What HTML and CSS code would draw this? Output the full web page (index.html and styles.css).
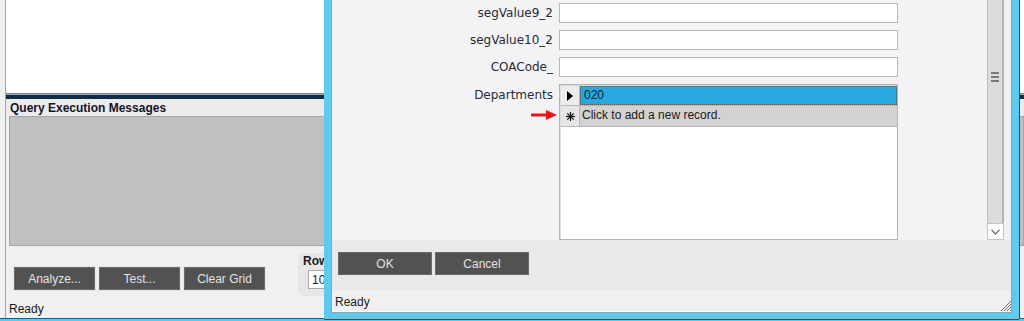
FILE: index.html
```html
<!DOCTYPE html>
<html>
<head>
<meta charset="utf-8">
<link rel="stylesheet" href="styles.css">
</head>
<body>
<div class="app">
  <div class="app-main">
    <div class="results"></div>
    <div class="splitter"></div>
    <div class="msg-head">Query Execution Messages</div>
    <div class="msg-body"></div>
    <div class="toolbar">
      <button class="dbtn wide">Analyze...</button>
      <button class="dbtn wide">Test...</button>
      <button class="dbtn wide">Clear Grid</button>
      <div class="rowpanel">
        <div class="rowlabel">Rows</div>
        <div class="rowinput">10</div>
      </div>
    </div>
    <div class="status">Ready</div>
  </div>
  <div class="taskbar"></div>
</div>

<div class="dialog">
  <div class="dlg-inner">
    <div class="dlg-body">
      <div class="form">
        <div class="lbl">segValue9_2</div><div class="inp"></div>
        <div class="lbl">segValue10_2</div><div class="inp"></div>
        <div class="lbl">COACode_</div><div class="inp"></div>
        <div class="lbl top">Departments</div>
        <div class="grid">
          <div class="grow">
            <div class="rh"><svg width="6" height="10" viewBox="0 0 6 10"><path d="M0 0 L6 5 L0 10 Z" fill="#000"/></svg></div>
            <div class="cell sel">020</div>
          </div>
          <div class="grow newrow">
            <div class="rh"><svg width="9" height="9" viewBox="0 0 9 9"><g stroke="#111" stroke-width="1.2"><path d="M4.5 0 V9"/><path d="M0 4.5 H9"/><path d="M1.3 1.3 L7.7 7.7"/><path d="M7.7 1.3 L1.3 7.7"/></g></svg></div>
            <div class="cell">Click to add a new record.</div>
          </div>
        </div>
      </div>
      <div class="vscroll">
        <div class="thumb"><div class="grip"><span></span><span></span><span></span></div></div>
        <div class="sbtn"><svg width="9" height="6" viewBox="0 0 9 6"><path d="M0.5 0.8 L4.5 4.8 L8.5 0.8" fill="none" stroke="#606060" stroke-width="1.2"/></svg></div>
      </div>
      <div class="edge"></div>
    </div>
    <div class="dlg-buttons">
      <button class="dbtn mid">OK</button>
      <button class="dbtn mid">Cancel</button>
    </div>
    <div class="dlg-status">
      <span>Ready</span>
      <svg class="gripper" width="12" height="12" viewBox="0 0 12 12"><g stroke="#707070" stroke-width="1"><path d="M12 2 L2 12"/><path d="M12 5 L5 12"/><path d="M12 8 L8 12"/><path d="M12 11 L11 12"/></g></svg>
    </div>
  </div>
  <svg class="arrow" width="26" height="10" viewBox="0 0 26 10"><path d="M0 3.5 H15 V0 L26 5 L15 10 V6.5 H0 Z" fill="#e8141a"/></svg>
</div>
</body>
</html>
```
FILE: styles.css
```css
* { box-sizing: border-box; }
html, body { margin: 0; padding: 0; }
body {
  width: 1024px;
  height: 321px;
  overflow: hidden;
  background: #f0f0f0;
  font-family: "Liberation Sans", Arial, sans-serif;
  font-size: 12px;
  color: #1a1a1a;
  position: relative;
}
.app {
  width: 1024px;
  height: 321px;
  display: flex;
  flex-direction: column;
}
.app-main {
  flex: 1;
  margin-left: 5px;
  border-left: 1px solid #a6a6a6;
  display: flex;
  flex-direction: column;
}
.results {
  height: 94px;
  background: #fff;
  border-bottom: 1px solid #8a8a8a;
}
.splitter {
  height: 5px;
  background: #0c2d4e;
  border-top: 1px solid #9aa0a6;
}
.msg-head {
  height: 17px;
  background: #ebebeb;
  font-weight: bold;
  color: #14142a;
  padding: 3px 0 0 4px;
  line-height: 13px;
}
.msg-body {
  height: 130px;
  margin-left: 3px;
  background: #c0c0c0;
  border: 1px solid #a4a4a4;
}
.toolbar {
  height: 52px;
  display: flex;
  align-items: flex-start;
  padding-left: 8px;
  gap: 4px;
}
.dbtn {
  font-family: "Liberation Sans", Arial, sans-serif;
  font-size: 12px;
  color: #e2e2e2;
  background: #525252;
  border: 1px solid #6c6c6c;
  box-shadow: 0 0 0 1px #e6e6e6;
  padding: 0;
  margin: 0;
  height: 23px;
}
.toolbar .dbtn { margin-top: 21px; }
.dbtn.wide { width: 81px; }
.dbtn.mid { width: 94px; }
.rowpanel {
  margin-left: 29px;
  margin-top: 7px;
  width: 80px;
  height: 43px;
  background: #e6e6e6;
  border-radius: 6px;
  padding: 1px 0 0 5px;
}
.rowlabel {
  font-weight: bold;
  line-height: 14px;
}
.rowinput {
  margin: 2px 0 0 5px;
  height: 19px;
  background: #fff;
  border: 1px solid #a8a8a8;
  padding: 2px 0 0 3px;
  font-size: 12px;
}
.status {
  height: 20px;
  padding: 4px 0 0 3px;
  line-height: 14px;
}
.taskbar {
  height: 3px;
  background: #5bc8ec;
  border-top: 1px solid #2e5a70;
}

/* dialog window */
.dialog {
  position: absolute;
  left: 324px;
  top: 0;
  width: 695px;
  height: 319px;
  background: #5ccbee;
  padding: 0 7px 6px 7px;
  box-shadow: 1px 0 0 #4a4a4a, 0 1px 0 #4a4a4a;
}
.dlg-inner {
  height: 100%;
  background: #f0f0f0;
  border: 1px solid #a0a0a0;
  border-top: none;
  display: flex;
  flex-direction: column;
}
.dlg-body {
  height: 240px;
  display: flex;
}
.form {
  width: 655px;
  background: #f3f3f5;
  display: grid;
  grid-template-columns: 221px 339px;
  grid-template-rows: 20px 20px 20px 1fr;
  column-gap: 6px;
  row-gap: 7px;
  padding-top: 3px;
  align-items: center;
}
.lbl {
  text-align: right;
  font-family: "DejaVu Sans", Verdana, sans-serif;
  font-size: 12px;
  color: #2a2a35;
  line-height: 16px;
}
.lbl.top {
  align-self: start;
  padding-top: 3px;
}
.inp {
  height: 20px;
  background: #fff;
  border: 1px solid #b8b8b8;
}
.grid {
  align-self: stretch;
  background: #fff;
  border: 1px solid #b4b4b4;
  box-shadow: inset 1px 1px 0 #dcdcdc;
  padding: 1px 0 0 1px;
  display: flex;
  flex-direction: column;
}
.grow {
  display: flex;
  height: 20px;
  border-bottom: 1px solid #b8b8b8;
}
.grow.newrow { height: 21px; }
.rh {
  width: 19px;
  background: #ececec;
  border-right: 1px solid #b8b8b8;
  display: flex;
  align-items: center;
  justify-content: center;
}
.cell {
  flex: 1;
  padding: 0 0 0 2px;
  line-height: 19px;
  font-size: 12px;
  color: #1a1a1a;
}
.cell.sel {
  background: #27a8e0;
  outline: 1px dotted #6a5030;
  outline-offset: -1px;
  color: #10202a;
  padding-left: 4px;
}
.newrow .cell {
  background: #d2d2d2;
}
.newrow .rh { background: #e6e6e6; }
.vscroll {
  width: 17px;
  display: flex;
  flex-direction: column;
}
.thumb {
  flex: 1;
  background: #dcdcdc;
  border-left: 1px solid #bdbdbd;
  border-right: 2px solid #b4b4b4;
}
.grip {
  margin: 72px auto 0;
  width: 8px;
  display: flex;
  flex-direction: column;
  gap: 2px;
}
.grip span {
  height: 2px;
  background: #7a7a7a;
}
.sbtn {
  height: 17px;
  background: #fff;
  border: 1px solid #c4c4c4;
  display: flex;
  align-items: center;
  justify-content: center;
}
.edge {
  flex: 1;
  background: #f0f0f0;
}
.dlg-buttons {
  height: 50px;
  background: #e9e9e9;
  display: flex;
  gap: 3px;
  padding: 12px 0 0 6px;
  align-items: flex-start;
}
.dlg-status {
  flex: 1;
  display: flex;
  justify-content: space-between;
  align-items: flex-start;
  padding: 5px 0 0 3px;
  line-height: 14px;
  border-bottom: 1px solid #fafafa;
}
.gripper {
  margin-top: 4px;
}
.arrow {
  position: absolute;
  left: 207px;
  top: 110px;
}
```
